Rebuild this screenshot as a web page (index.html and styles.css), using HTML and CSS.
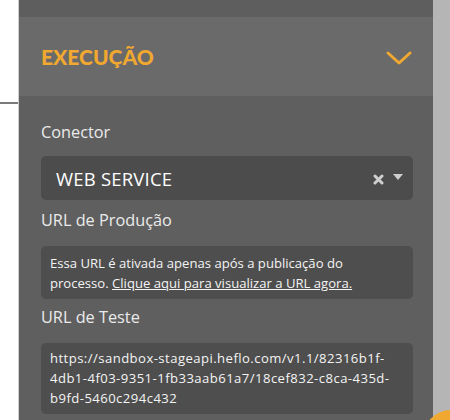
FILE: index.html
```html
<!DOCTYPE html>
<html lang="pt">
<head>
    <meta charset="UTF-8">
    <title>Execução</title>
    <link rel="stylesheet" href="styles.css">
</head>
<body>
<div class="page">
    <div class="canvas">
        <div class="canvas_line"></div>
    </div>
    <div class="panel">
        <div class="panel_top"></div>
        <div class="section_head">
            <span class="section_title">EXECUÇÃO</span>
            <svg class="chevron" width="26" height="16" viewBox="0 0 26 16">
                <path d="M2 3 L13 13 L24 3" fill="none" stroke="#f0a830" stroke-width="3" stroke-linecap="round" stroke-linejoin="round"/>
            </svg>
        </div>
        <div class="section_body">
            <label class="field_label">Conector</label>
            <div class="select">
                <span class="select_value">WEB SERVICE</span>
                <svg class="select_clear" width="11" height="11" viewBox="0 0 11 11">
                    <path d="M2 2 L9 9 M9 2 L2 9" stroke="#cfcfcf" stroke-width="3" stroke-linecap="round"/>
                </svg>
                <span class="select_arrow"></span>
            </div>
            <label class="field_label">URL de Produção</label>
            <div class="info_box">
                Essa URL é ativada apenas após a publicação do processo. <a href="javascript:void(0)">Clique aqui para visualizar a URL agora.</a>
            </div>
            <label class="field_label">URL de Teste</label>
            <div class="info_box url">
                https://sandbox-stageapi.heflo.com/v1.1/82316b1f-4db1-4f03-9351-1fb33aab61a7/18cef832-c8ca-435d-b9fd-5460c294c432
            </div>
        </div>
    </div>
    <div class="scroll_strip"></div>
    <span class="fab"></span>
</div>
</body>
</html>
```

FILE: styles.css
```css
html,body{margin:0;padding:0;}
body{font-family:"Open Sans","Lato",sans-serif;background:#fff;overflow:hidden;}
.page{position:relative;display:flex;width:450px;height:420px;overflow:hidden;}
.canvas{width:18px;border-right:1px solid #cfcfcf;flex:none;padding-top:102px;}
.canvas_line{height:2px;background:#7a7a7a;}
.panel{width:414px;flex:none;background:#5f5f5f;}
.panel_top{height:17px;background:#5e5e5e;}
.section_head{display:flex;align-items:center;justify-content:space-between;height:79px;background:#6a6a6a;padding:0 22px 0 22px;}
.section_title{font-family:"Lato",sans-serif;color:#f0a830;font-weight:900;font-size:21px;}
.chevron{margin-right:-1px;margin-top:2px;}
.section_body{padding:26px 20px 0 22px;}
.field_label{display:block;color:#ebebeb;font-size:16.3px;line-height:20px;}
.select{display:flex;align-items:center;height:44px;margin:14px 0 10px;background:#4c4c4c;border-radius:5px;padding:0 10px 0 15px;}
.select_value{flex:1;color:#fff;font-size:18.5px;letter-spacing:0.2px;}
.select_clear{margin-right:9px;margin-top:3px;}
.select_arrow{width:0;height:0;border-left:5px solid transparent;border-right:5px solid transparent;border-top:6px solid #cfcfcf;margin-top:-2px;}
.info_box{margin:16px 0 8px;background:#4e4e4e;border-radius:5px;padding:7px 10px 6px 9px;color:#f4f4f4;font-size:13.1px;line-height:20px;}
.info_box a{color:#f4f4f4;text-decoration:underline;}
.info_box.url{padding:5px 10px 6px 9px;letter-spacing:0.45px;}
.scroll_strip{flex:1;background:#b5b5b5;}
.fab{position:absolute;left:423px;top:410px;width:56px;height:56px;border-radius:50%;background:#f0a830;}
```
